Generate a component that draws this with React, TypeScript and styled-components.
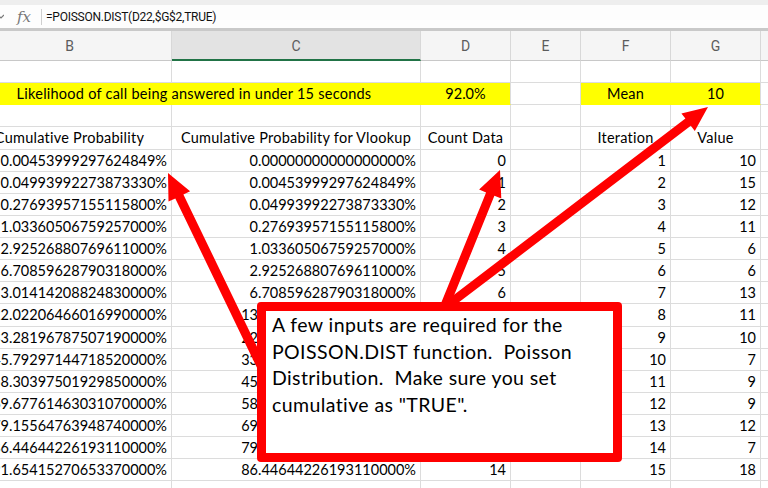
import React from 'react';
import styled, { createGlobalStyle } from 'styled-components';

const GlobalStyle = createGlobalStyle`
  html, body { margin: 0; padding: 0; background: #ffffff; }
  body { width: 768px; height: 488px; overflow: hidden; font-family: Lato, "Liberation Sans", sans-serif; }
`;

const Page = styled.div`
  position: relative;
  width: 768px;
  height: 488px;
  overflow: hidden;
  background: #ffffff;
`;

const FormulaBar = styled.div`
  height: 31px;
  box-sizing: border-box;
  border-top: 5px solid #eeeeee;
  border-bottom: 3px solid #c9c9c9;
  background: #fdfdfd;
  display: flex;
  align-items: center;
`;

const NameTail = styled.svg`
  width: 4px;
  height: 10px;
  flex: none;
`;

const Fx = styled.span`
  margin-left: 13px;
  font-family: "DejaVu Serif", "Liberation Serif", serif;
  font-style: italic;
  font-size: 15px;
  color: #777777;
  width: 16px;
`;

const Divider = styled.span`
  margin-left: 8px;
  width: 1px;
  height: 16px;
  background: #cfcfcf;
`;

const Formula = styled.span`
  margin-left: 4px;
  font-family: Roboto, "Liberation Sans", sans-serif;
  font-size: 12px;
  letter-spacing: -0.25px;
  color: #111111;
`;

const SheetClip = styled.div`
  overflow: hidden;
`;

const Sheet = styled.div`
  margin-left: -32px;
  display: grid;
  grid-template-columns: 204px 249px 90px 70px 90px 90px 100px;
  grid-template-rows: 30px;
  grid-auto-rows: 22.14px;
`;

const HeadCell = styled.div<{ $selected?: boolean }>`
  box-sizing: border-box;
  display: flex;
  align-items: center;
  justify-content: center;
  font-family: Roboto, "Liberation Sans", sans-serif;
  font-size: 14px;
  color: #5c5c5c;
  background: ${(p) => (p.$selected ? '#e3e3e3' : '#f5f5f5')};
  border-right: 1px solid #d8d8d8;
  border-bottom: ${(p) => (p.$selected ? '2px solid #217346' : '1px solid #c8c8c8')};
  padding-top: ${(p) => (p.$selected ? '1px' : '0')};
`;

type Align = 'left' | 'center' | 'right';

const Cell = styled.div<{ $align?: Align; $fill?: boolean; $span?: number; $joinRight?: boolean; $label?: boolean }>`
  box-sizing: border-box;
  grid-column: span ${(p) => p.$span ?? 1};
  padding: 0 4px;
  font-size: 14.5px;
  line-height: 21px;
  letter-spacing: ${(p) => (p.$label ? '0.25px' : '0')};
  color: #000000;
  white-space: nowrap;
  text-align: ${(p) => p.$align ?? 'left'};
  background: ${(p) => (p.$fill ? '#ffff00' : '#ffffff')};
  border-right: 1px solid ${(p) => (p.$fill && p.$joinRight ? '#ffff00' : '#dcdcdc')};
  border-bottom: 1px solid ${(p) => (p.$fill ? '#ffff00' : '#dcdcdc')};
`;

const Overlay = styled.svg`
  position: absolute;
  left: 0;
  top: 0;
  width: 768px;
  height: 488px;
  pointer-events: none;
`;

const Callout = styled.div`
  position: absolute;
  left: 257px;
  top: 302px;
  width: 365px;
  height: 160px;
  box-sizing: border-box;
  border: 9px solid #ff0000;
  border-radius: 4px;
  background: #ffffff;
  padding: 1px 6px;
  font-size: 19.5px;
  letter-spacing: 0.4px;
  line-height: 26.67px;
  color: #000000;
`;

const B = [
  '0.00453999297624849%',
  '0.04993992273873330%',
  '0.27693957155115800%',
  '1.03360506759257000%',
  '2.92526880769611000%',
  '6.70859628790318000%',
  '13.01414208824830000%',
  '22.02206466016990000%',
  '33.28196787507190000%',
  '45.79297144718520000%',
  '58.30397501929850000%',
  '69.67761463031070000%',
  '79.15564763948740000%',
  '86.44644226193110000%',
  '91.65415270653370000%',
];
const C = ['0.00000000000000000%', ...B.slice(0, 14)];
const G = [10, 15, 12, 11, 6, 6, 13, 11, 10, 7, 9, 9, 12, 7, 18];

type Pt = [number, number];

function arrowPoints(tail: Pt, tip: Pt, shaft = 9, headL = 26, headW = 24): string {
  const dx = tip[0] - tail[0];
  const dy = tip[1] - tail[1];
  const len = Math.hypot(dx, dy);
  const ux = dx / len;
  const uy = dy / len;
  const nx = -uy;
  const ny = ux;
  const bx = tip[0] - ux * headL;
  const by = tip[1] - uy * headL;
  const s = shaft / 2;
  const h = headW / 2;
  const pts: Pt[] = [
    [tail[0] + nx * s, tail[1] + ny * s],
    [bx + nx * s, by + ny * s],
    [bx + nx * h, by + ny * h],
    tip,
    [bx - nx * h, by - ny * h],
    [bx - nx * s, by - ny * s],
    [tail[0] - nx * s, tail[1] - ny * s],
  ];
  return pts.map((p) => `${p[0].toFixed(1)},${p[1].toFixed(1)}`).join(' ');
}

const BlankRow: React.FC = () => (
  <>
    {Array.from({ length: 7 }).map((_, i) => (
      <Cell key={i} />
    ))}
  </>
);

export default function App() {
  const headers = ['B', 'C', 'D', 'E', 'F', 'G', 'H'];
  return (
    <Page>
      <GlobalStyle />
      <FormulaBar>
        <NameTail viewBox="0 0 4 10">
          <path d="M-2 3 L1 6 L4 3" fill="none" stroke="#777" strokeWidth="1.2" />
        </NameTail>
        <Fx>fx</Fx>
        <Divider />
        <Formula>=POISSON.DIST(D22,$G$2,TRUE)</Formula>
      </FormulaBar>
      <SheetClip>
        <Sheet>
          {headers.map((h) => (
            <HeadCell key={h} $selected={h === 'C'}>
              {h === 'H' ? '' : h}
            </HeadCell>
          ))}
          <BlankRow />
          <Cell $span={2} $fill $joinRight $label $align="center">
            Likelihood of call being answered in under 15 seconds
          </Cell>
          <Cell $fill $align="center">92.0%</Cell>
          <Cell />
          <Cell $fill $joinRight $label $align="center">Mean</Cell>
          <Cell $fill $align="center">10</Cell>
          <Cell />
          <BlankRow />
          <Cell $label $align="center">Cumulative Probability</Cell>
          <Cell $label $align="center">Cumulative Probability for Vlookup</Cell>
          <Cell $label $align="center">Count Data</Cell>
          <Cell />
          <Cell $label $align="center">Iteration</Cell>
          <Cell $label $align="center">Value</Cell>
          <Cell />
          {B.map((b, i) => (
            <React.Fragment key={i}>
              <Cell $align="right">{b}</Cell>
              <Cell $align="right">{C[i]}</Cell>
              <Cell $align="right">{i}</Cell>
              <Cell />
              <Cell $align="right">{i + 1}</Cell>
              <Cell $align="right">{G[i]}</Cell>
              <Cell />
            </React.Fragment>
          ))}
          <BlankRow />
        </Sheet>
      </SheetClip>
      <Overlay viewBox="0 0 768 488">
        <polygon points={arrowPoints([268, 380], [168, 173])} fill="#ff0000" />
        <polygon points={arrowPoints([444, 308], [500, 170])} fill="#ff0000" />
        <polygon points={arrowPoints([444, 308], [708, 107], 9, 25, 22)} fill="#ff0000" />
      </Overlay>
      <Callout>
        A few inputs are required for the POISSON.DIST function.&nbsp; Poisson Distribution.&nbsp; Make sure you set cumulative as "TRUE".
      </Callout>
    </Page>
  );
}
